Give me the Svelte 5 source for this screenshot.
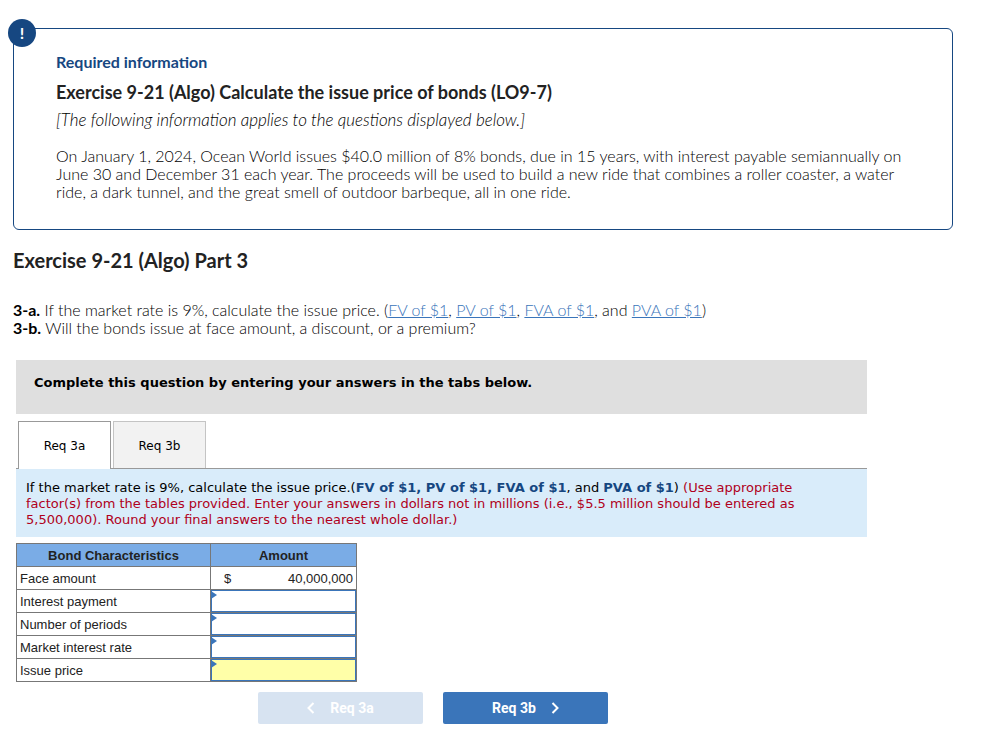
<script lang="ts">
    let tab: string = $state("a")

    let rows = $state([
        { id: "interest", label: "Interest payment", value: "", result: false },
        { id: "periods", label: "Number of periods", value: "", result: false },
        { id: "rate", label: "Market interest rate", value: "", result: false },
        { id: "price", label: "Issue price", value: "", result: true }
    ])
</script>


<main>
    <section class="info">
        <span class="badge">!</span>
        <p class="required">Required information</p>
        <h2>Exercise 9-21 (Algo) Calculate the issue price of bonds (LO9-7)</h2>
        <p class="applies">[The following information applies to the questions displayed below.]</p>
        <p class="story">
            On January 1, 2024, Ocean World issues $40.0 million of 8% bonds, due in 15 years, with interest payable semiannually on
            June 30 and December 31 each year. The proceeds will be used to build a new ride that combines a roller coaster, a water
            ride, a dark tunnel, and the great smell of outdoor barbeque, all in one ride.
        </p>
    </section>

    <h1>Exercise 9-21 (Algo) Part 3</h1>

    <div class="questions">
        <p><b>3-a.</b> If the market rate is 9%, calculate the issue price. (<a href="#fv">FV of $1</a>, <a href="#pv">PV of $1</a>, <a href="#fva">FVA of $1</a>, and <a href="#pva">PVA of $1</a>)</p>
        <p><b>3-b.</b> Will the bonds issue at face amount, a discount, or a premium?</p>
    </div>

    <section class="tool">
        <p class="banner">Complete this question by entering your answers in the tabs below.</p>

        <div class="tabs" role="tablist">
            <button role="tab" aria-selected={tab === "a"} class="tab {tab === 'a' ? 'current' : ''}" onclick={() => tab = "a"}>Req 3a</button>
            <button role="tab" aria-selected={tab === "b"} class="tab {tab === 'b' ? 'current' : ''}" onclick={() => tab = "b"}>Req 3b</button>
        </div>

        <p class="prompt">
            If the market rate is 9%, calculate the issue price.(<b>FV of $1, PV of $1, FVA of $1</b>, and <b>PVA of $1</b>)
            <span class="hint">(Use appropriate factor(s) from the tables provided. Enter your answers in dollars not in millions (i.e., $5.5 million should be entered as 5,500,000). Round your final answers to the nearest whole dollar.)</span>
        </p>

        <table>
            <thead>
                <tr>
                    <th class="name">Bond Characteristics</th>
                    <th class="amount">Amount</th>
                </tr>
            </thead>
            <tbody>
                <tr>
                    <td>Face amount</td>
                    <td><div class="money"><span>$</span><span>40,000,000</span></div></td>
                </tr>
                {#each rows as row}
                    <tr>
                        <td><label for={row.id}>{row.label}</label></td>
                        <td class="entry">
                            <input id={row.id} class:result={row.result} type="text" bind:value={row.value} />
                        </td>
                    </tr>
                {/each}
            </tbody>
        </table>

        <div class="nav">
            <button disabled={tab === "a"} onclick={() => tab = "a"}>
                <svg width="8" height="12" viewBox="0 0 8 12"><path d="M6.500 1 1.500 6l5 5" /></svg>
                Req 3a
            </button>
            <button disabled={tab === "b"} onclick={() => tab = "b"}>
                Req 3b
                <svg width="8" height="12" viewBox="0 0 8 12"><path d="M1.500 1 6.500 6l-5 5" /></svg>
            </button>
        </div>
    </section>
</main>


<style>
    :global(body) {
        background: #fff;
    }

    main {
        padding: 28px 50px 20px 13px;
        color: #000;
        font-family: Lato, sans-serif;
        font-size: 16px;
        font-weight: 300;
        line-height: 18px;
    }

    p, h1, h2 {
        margin: 0;
    }

    h1, h2 {
        color: #222;
    }

    b {
        font-weight: bold;
    }

    .info {
        position: relative;
        padding: 23px 40px 28px 42px;
        border: 1px solid #164781;
        border-radius: 6px;
    }

    .badge {
        position: absolute;
        top: -10px;
        left: -6px;
        width: 28px;
        height: 28px;
        border-radius: 50%;
        background: #164781;
        color: #fff;
        font-weight: bold;
        line-height: 28px;
        text-align: center;
    }

    .required {
        color: #164781;
        font-weight: bold;
        line-height: 20px;
    }

    h2 {
        margin-top: 9px;
        font-size: 18px;
        line-height: 22px;
    }

    .applies {
        margin-top: 8px;
        font-size: 17px;
        font-style: italic;
    }

    .story {
        margin-top: 18px;
    }

    h1 {
        margin-top: 18px;
        font-size: 20px;
        line-height: 24px;
    }

    .questions {
        margin-top: 29px;
    }

    a {
        color: #3a75ba;
    }

    .tool {
        margin: 23px 86px 0 3px;
        font-family: Verdana, "DejaVu Sans", sans-serif;
        font-size: 13px;
        font-weight: normal;
        line-height: 16px;
    }

    .banner {
        padding: 15px 18px 23px;
        background: #dfdfdf;
        font-weight: bold;
    }

    .tabs {
        display: flex;
        gap: 2px;
        margin-top: 7px;
        padding: 0 2px;
        border-bottom: 1px solid #999;
    }

    .tab {
        width: 93px;
        height: 47px;
        padding: 1px 0 0;
        border: 1px solid #c4c4c4;
        border-bottom: 0;
        background: #f2f2f2;
        color: #000;
        font-family: inherit;
        font-size: 12px;
    }

    .tab.current {
        height: 48px;
        margin-bottom: -1px;
        border-color: #999;
        background: #fff;
    }

    .prompt {
        padding: 11px 50px 9px 10px;
        background: #d9ecfa;
    }

    .prompt b {
        color: #164781;
    }

    .hint {
        color: #b00020;
    }

    table {
        margin-top: 6px;
        border-collapse: collapse;
        color: #222;
        font-family: "Liberation Sans", Arial, sans-serif;
        font-size: 13px;
    }

    th, td {
        height: 20px;
        padding: 2px 3px 0;
        border: 1px solid #777;
        text-align: left;
    }

    th {
        background: #7aace6;
        text-align: center;
    }

    .name {
        width: 187px;
    }

    .amount {
        width: 139px;
    }

    .money {
        display: flex;
        justify-content: space-between;
        padding-left: 10px;
    }

    .entry {
        position: relative;
        padding: 0;
    }

    .entry::before {
        content: "";
        position: absolute;
        top: 1px;
        left: 0;
        border: solid transparent;
        border-width: 4px 0 4px 6px;
        border-left-color: #3a75ba;
    }

    input {
        display: block;
        box-sizing: border-box;
        width: 100%;
        height: 22px;
        padding: 0 3px;
        border: 1px solid #3a75ba;
        border-radius: 0;
        background: #fff;
        font: inherit;
        text-align: right;
    }

    input.result {
        background: #ffffa8;
    }

    .nav {
        display: flex;
        justify-content: center;
        gap: 20px;
        margin-top: 10px;
        padding-right: 17px;
    }

    .nav button {
        display: flex;
        justify-content: center;
        align-items: center;
        gap: 15px;
        width: 165px;
        height: 32px;
        padding: 0;
        border: 0;
        border-radius: 2px;
        background: #3a75ba;
        color: #fff;
        font-family: Roboto, sans-serif;
        font-size: 14px;
        font-weight: bold;
    }

    .nav button:disabled {
        background: #d7e3f1;
    }

    path {
        fill: none;
        stroke: currentColor;
        stroke-width: 2;
    }
</style>
